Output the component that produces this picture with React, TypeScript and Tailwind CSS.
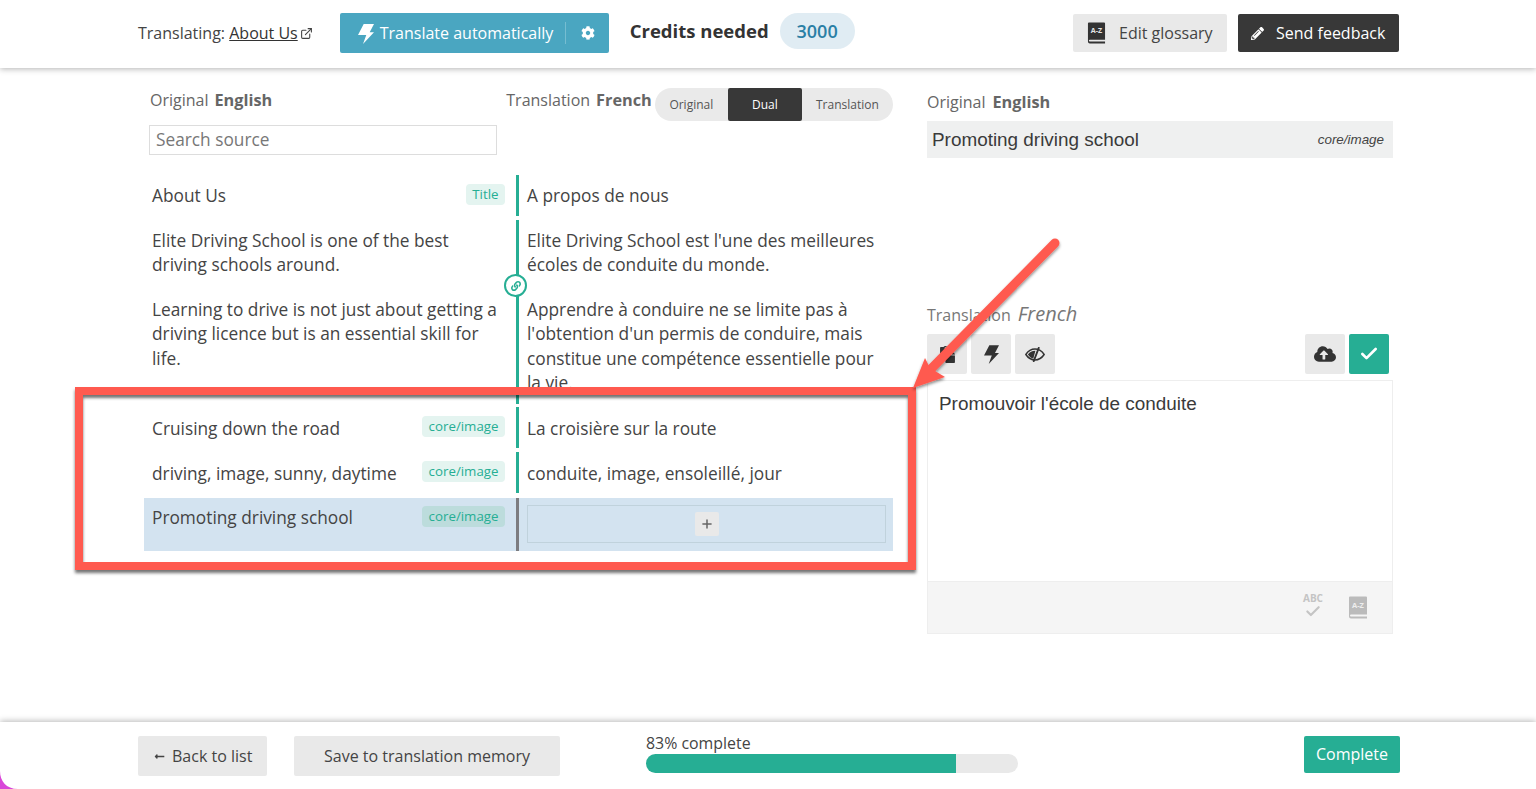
import React from "react";
import { FaCog, FaPencilAlt, FaCloudUploadAlt, FaLink, FaPaste, FaLongArrowAltLeft } from "react-icons/fa";
import { FiExternalLink, FiCheck, FiPlus } from "react-icons/fi";

function Bolt({ className }: { className: string }) {
  return (
    <svg viewBox="0 0 16 20" className={className} fill="currentColor">
      <path d="M5.700 0H16L11.700 8.300H16L5 20L8.300 11H0z" />
    </svg>
  );
}

function Book({ color, letters, className }: { color: string; letters: string; className: string }) {
  return (
    <svg viewBox="0 0 20 22" className={className}>
      <path d="M2 0h16a1 1 0 0 1 1 1v17H3a1 1 0 0 0 0 2h16v2H3a2 2 0 0 1-2-2V1a1 1 0 0 1 1-1z" fill={color} />
      <text x="10" y="11.5" textAnchor="middle" fontSize="7.5" fontWeight="700" fill={letters} fontFamily="Open Sans">A-Z</text>
    </svg>
  );
}

function EyeHalf({ className }: { className: string }) {
  return (
    <svg viewBox="0 0 24 18" className={className}>
      <path d="M1 9C4 4.5 7.5 2.5 12 2.5S20 4.500 23 9c-3 4.500-6.500 6.500-11 6.500S4 13.500 1 9z" fill="none" stroke="#333" strokeWidth="1.8" />
      <path d="M3.500 9C6 6 8 4.600 12.500 4.500L10 13.800C7 13.500 5.500 11.500 3.500 9z" fill="#333" />
      <line x1="16.500" y1="1" x2="10.500" y2="17" stroke="#333" strokeWidth="2.200" strokeLinecap="round" />
    </svg>
  );
}

function Tag({ children, active }: { children: React.ReactNode; active?: boolean }) {
  return (
    <span className={`block shrink-0 h-[21px] px-[6.5px] rounded-[4px] text-[13.3px] leading-[20px] text-[#26ae94] ${active ? "bg-[#bcdcdc]" : "bg-[#e4f4f0]"}`}>
      {children}
    </span>
  );
}

function Row({ left, tag, right, mt, pt }: { left: React.ReactNode; tag: string; right: React.ReactNode; mt?: string; pt: string }) {
  return (
    <div className={`flex h-[41px] ${mt ?? ""}`}>
      <div className="w-[372px] pl-[8px] pr-[11px] flex justify-between items-start">
        <div className={`text-[17.3px] leading-[24.5px] text-[#444] ${pt}`}>{left}</div>
        <div className="pt-[9px]"><Tag>{tag}</Tag></div>
      </div>
      <div className="w-[3px] bg-[#26ae94]" />
      <div className={`pl-[8px] w-[374px] text-[17.3px] leading-[24.5px] text-[#444] ${pt}`}>{right}</div>
    </div>
  );
}

export default function App() {
  return (
    <div className="relative w-[1536px] h-[789px] overflow-hidden bg-white flex flex-col font-['Open_Sans',sans-serif] text-[#444]">
      {/* top bar */}
      <header className="relative z-10 h-[68px] shrink-0 flex items-center pl-[138px] pr-[137px] pb-[2px] bg-white shadow-[0_1px_6px_rgba(0,0,0,0.3)]">
        <span className="text-[16px] text-[#444] whitespace-nowrap">Translating:&nbsp;</span>
        <span className="text-[16px] underline text-[#333] whitespace-nowrap">About Us</span>
        <FiExternalLink className="ml-[2px] w-[13px] h-[13px] text-[#444]" />
        <div className="ml-[27px] shrink-0 w-[269px] h-[40px] rounded-[2px] bg-[#4aa6c1] flex items-center pl-[18px] text-white">
          <Bolt className="w-[16px] h-[20px] mr-[6px] shrink-0 mt-[2px]" />
          <span className="text-[16px] whitespace-nowrap">Translate automatically</span>
          <span className="ml-[12px] w-px h-[22px] bg-[#76bdd1]" />
          <FaCog className="ml-[15px] w-[14px] h-[14px] shrink-0" />
        </div>
        <span className="ml-[21px] -mt-[4px] text-[18.500px] font-bold text-[#333] whitespace-nowrap">Credits needed</span>
        <span className="ml-[11px] -mt-[4px] w-[75px] h-[36px] rounded-full bg-[#e0ecf3] text-center leading-[36px] text-[18px] font-semibold text-[#2a7fa5]">3000</span>
        <div className="ml-auto flex items-center h-[38px] w-[154px] rounded-[2px] bg-[#e9e9e9] pl-[14px]">
          <Book color="#333" letters="#e5e5e5" className="w-[19px] h-[22px]" />
          <span className="ml-[13px] text-[16px] text-[#444]">Edit glossary</span>
        </div>
        <div className="ml-[11px] flex items-center h-[38px] w-[161px] rounded-[2px] bg-[#383838] pl-[13px] text-white">
          <FaPencilAlt className="w-[13px] h-[13px]" />
          <span className="ml-[12px] text-[16px]">Send feedback</span>
        </div>
      </header>

      {/* body */}
      <main className="flex-1 flex pl-[144px]">
        <section className="w-[749px] pt-[20px]">
          <div className="flex">
            <div className="w-[363px] pl-[6px]">
              <div className="h-[25px] text-[16px] text-[#666] leading-[25px]">
                Original<b className="ml-[6px] font-bold text-[16.300px]">English</b>
              </div>
              <div className="mt-[12px] -ml-[1px] h-[30px] w-[348px] border border-[#ddd] pl-[6px] text-[17.3px] leading-[28px] text-[#777]">Search source</div>
            </div>
            <div className="h-[25px] pl-[0.5px] text-[16px] text-[#666] leading-[25px] whitespace-nowrap">
              Translation<b className="ml-[6px] font-bold text-[16.300px]">French</b>
            </div>
            <div className="ml-[3px] h-[33px] w-[239px] rounded-full bg-[#eaeaea] flex text-[12px] items-center">
              <span className="w-[73px] text-center text-[#555]">Original</span>
              <span className="w-[74px] h-[33px] rounded-[2px] bg-[#383838] text-white text-center leading-[33px]">Dual</span>
              <span className="flex-1 text-center text-[#555]">Translation</span>
            </div>
          </div>
          <div className="mt-[20px]">
            <Row pt="pt-[9px]" tag="Title" left="About Us" right="A propos de nous" />
            <div className="relative mt-[4px]">
              <div className="absolute z-[1] left-[360px] top-[54px] w-[23px] h-[23px] rounded-full border-[2.5px] border-[#26ae94] bg-white flex items-center justify-center">
                <FaLink className="w-[10px] h-[10px] text-[#26ae94]" />
              </div>
              <div className="flex h-[184px]">
                <div className="w-[372px] pl-[8px] pr-[14px] text-[17.3px] leading-[24.4px] text-[#444]">
                  <p className="pt-[9px]">Elite Driving School is one of the best driving schools around.</p>
                  <p className="mt-[20px]">Learning to drive is not just about getting a driving licence but is an essential skill for life.</p>
                </div>
                <div className="w-[3px] bg-[#26ae94]" />
                <div className="pl-[8px] w-[374px] pr-[8px] text-[17.3px] leading-[24.4px] text-[#444] overflow-hidden">
                  <p className="pt-[9px]">Elite Driving School est l'une des meilleures écoles de conduite du monde.</p>
                  <p className="mt-[20px]">Apprendre à conduire ne se limite pas à l'obtention d'un permis de conduire, mais constitue une compétence essentielle pour la vie.</p>
                </div>
              </div>
            </div>
            <Row pt="pt-[10px]" mt="mt-[3px]" tag="core/image" left="Cruising down the road" right="La croisière sur la route" />
            <Row pt="pt-[10px]" mt="mt-[4px]" tag="core/image" left="driving, image, sunny, daytime" right="conduite, image, ensoleillé, jour" />
            <div className="flex h-[53px] mt-[5px] bg-[#d3e3f0]">
              <div className="w-[372px] pl-[8px] pr-[11px] flex justify-between items-start pt-[8px]">
                <div className="text-[17.3px] leading-[24.5px] text-[#444]">Promoting driving school</div>
                <Tag active>core/image</Tag>
              </div>
              <div className="w-[3px] bg-[#7c7c80]" />
              <div className="ml-[8px] mt-[7px] w-[359px] h-[38px] border border-[#c0d2dc] flex items-center justify-center">
                <span className="w-[24px] h-[24px] rounded-[2px] bg-[#e9e9e9] flex items-center justify-center">
                  <FiPlus strokeWidth={2.6} className="w-[14px] h-[14px] text-[#666]" />
                </span>
              </div>
            </div>
          </div>
        </section>

        <aside className="ml-[34px] w-[466px] pt-[22px]">
          <div className="h-[25px] text-[16px] text-[#666] leading-[25px]">
            Original<b className="ml-[7px] font-bold text-[16.300px]">English</b>
          </div>
          <div className="mt-[6px] h-[37px] pt-[1px] bg-[#eff0f0] flex items-center justify-between pl-[5px] pr-[9px] font-['Liberation_Sans',sans-serif]">
            <span className="text-[18.9px] text-[#3a3a3a]">Promoting driving school</span>
            <span className="text-[13.4px] italic text-[#444]">core/image</span>
          </div>
          <div className="mt-[144px] h-[24px] text-[16px] text-[#777] leading-[24px] whitespace-nowrap">
            Translation<span className="ml-[7px] italic text-[20px]">French</span>
          </div>
          <div className="mt-[8px] flex gap-[4px] pr-[4px]">
            <span className="w-[40px] h-[40px] rounded-[2px] bg-[#e9e9e9] flex items-center justify-center"><FaPaste className="w-[17px] h-[17px] text-[#333]" /></span>
            <span className="w-[40px] h-[40px] rounded-[2px] bg-[#e9e9e9] flex items-center justify-center"><Bolt className="w-[15px] h-[19px] text-[#333]" /></span>
            <span className="w-[40px] h-[40px] rounded-[2px] bg-[#e9e9e9] flex items-center justify-center"><EyeHalf className="w-[20px] h-[15px]" /></span>
            <span className="ml-auto w-[40px] h-[40px] rounded-[2px] bg-[#e9e9e9] flex items-center justify-center"><FaCloudUploadAlt className="w-[22px] h-[22px] text-[#333]" /></span>
            <span className="w-[40px] h-[40px] rounded-[2px] bg-[#26ae94] flex items-center justify-center"><FiCheck strokeWidth={3.2} className="w-[20px] h-[20px] text-white" /></span>
          </div>
          <div className="mt-[6px] h-[254px] border border-[#eee] flex flex-col">
            <div className="flex-1 pl-[11px] pt-[10px] text-[18.9px] leading-[26px] text-[#3a3a3a] font-['Liberation_Sans',sans-serif]">Promouvoir l'école de conduite</div>
            <div className="h-[52px] bg-[#f5f5f5] border-t border-[#eee] flex items-center justify-end pr-[24px]">
              <div className="flex flex-col items-center text-[#c4c4c4] mr-[25px] -mt-[3px]">
                <span className="text-[10px] font-bold leading-[10px]">ABC</span>
                <FiCheck strokeWidth={3} className="w-[20px] h-[17px]" />
              </div>
              <Book color="#bbb" letters="#eee" className="w-[20px] h-[23px]" />
            </div>
          </div>
        </aside>
      </main>

      {/* footer */}
      <footer className="relative z-10 h-[67px] shrink-0 bg-white shadow-[0_-1px_6px_rgba(0,0,0,0.28)] flex items-start pl-[138px] pr-[136px] pt-[14px]">
        <div className="h-[40px] w-[129px] rounded-[2px] bg-[#e9e9e9] flex items-center pl-[15px] text-[16px] text-[#444]">
          <FaLongArrowAltLeft className="w-[13px] h-[11px] mr-[6px]" />Back to list
        </div>
        <div className="ml-[27px] h-[40px] w-[266px] rounded-[2px] bg-[#e9e9e9] flex items-center justify-center text-[16px] text-[#444]">
          Save to translation memory
        </div>
        <div className="ml-[86px] w-[372px] -mt-[3px]">
          <div className="text-[15.9px] leading-[20px] text-[#444] h-[21px]">83% complete</div>
          <div className="h-[19px] rounded-full bg-[#e9e9e9] overflow-hidden">
            <div className="h-full bg-[#26ae94]" style={{ width: "83.3%" }} />
          </div>
        </div>
        <div className="ml-auto h-[37px] w-[96px] rounded-[2px] bg-[#26ae94] text-white text-[16px] leading-[36px] text-center">Complete</div>
        <div className="absolute left-0 bottom-0 w-[18px] h-[18px] overflow-hidden">
          <svg viewBox="0 0 18 18" className="w-[18px] h-[18px]">
            <path d="M0 0C0 10 6 18 18 18H0z" fill="#d946d8" />
          </svg>
        </div>
      </footer>

      {/* annotation overlay */}
      <div className="absolute z-20 left-[75px] top-[387px] w-[841px] h-[183px] border-[8px] border-[#ff5a4f] shadow-[0_3px_3px_rgba(0,0,0,0.55),inset_0_3px_3px_rgba(0,0,0,0.55)]" />
      <svg className="absolute z-20 left-0 top-0 w-[1536px] h-[789px] pointer-events-none" viewBox="0 0 1536 789">
        <defs>
          <filter id="as" x="-20%" y="-20%" width="140%" height="140%">
            <feDropShadow dx="0" dy="2" stdDeviation="1.5" floodColor="#000" floodOpacity="0.45" />
          </filter>
        </defs>
        <g filter="url(#as)">
          <line x1="1055" y1="243" x2="928" y2="372" stroke="#ff5a4f" strokeWidth="9" strokeLinecap="round" />
          <path d="M913 388L925 358L930 368L945 377z" fill="#ff5a4f" />
        </g>
      </svg>
    </div>
  );
}
